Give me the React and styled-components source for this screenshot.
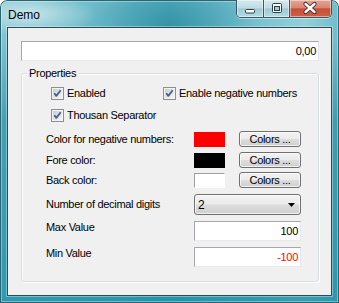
import React from "react";
import styled, { createGlobalStyle } from "styled-components";

const Global = createGlobalStyle`
  html, body { margin: 0; padding: 0; background: #fff; }
  body {
    font-family: "Liberation Sans", Arial, sans-serif;
    font-size: 11px;
    color: #000;
    overflow: hidden;
  }
  #root { width: 339px; height: 303px; }
`;

const Window = styled.div`
  box-sizing: border-box;
  width: 339px;
  height: 303px;
  display: flex;
  flex-direction: column;
  padding: 0 7px 7px 7px;
  border-radius: 7px 7px 0 0;
  background:
    radial-gradient(ellipse 70px 22px at 28px 14px, rgba(255,255,255,0.6), rgba(255,255,255,0) 100%),
    radial-gradient(ellipse 90px 40px at 170px 24px, rgba(30,130,150,0.55), rgba(30,130,150,0) 100%),
    linear-gradient(180deg, rgba(255,255,255,0) 0px, rgba(255,255,255,0) 40px, rgba(20,130,155,0.55) 120px, rgba(20,140,165,0.75) 100%),
    linear-gradient(90deg, #7ec4d1 0%, #6cbac9 30%, #52abbd 50%, #78c1ce 75%, #92d0da 90%, #6fbccb 100%);
  box-shadow: inset 0 0 0 1px #2b6573, inset 0 0 0 2px rgba(255,255,255,0.35);
`;

const TitleBar = styled.div`
  height: 27px;
  flex: none;
  display: flex;
  align-items: flex-start;
`;

const Title = styled.span`
  font-size: 12px;
  letter-spacing: 0;
  line-height: 14px;
  margin-top: 8px;
  padding-left: 1px;
  color: #000;
`;

const CaptionGroup = styled.div`
  margin-left: auto;
  display: flex;
  height: 18px;
  box-sizing: border-box;
  border: 1px solid #3a5864;
  border-top: none;
  border-radius: 0 0 5px 5px;
  overflow: hidden;
  box-shadow: 0 1px 0 rgba(255,255,255,0.5);
`;

const CaptionButton = styled.div`
  width: ${(p) => p.$w}px;
  height: 17px;
  box-sizing: border-box;
  display: flex;
  border-left: ${(p) => (p.$first ? "none" : "1px solid #3a5864")};
  background: ${(p) =>
    p.$close
      ? "linear-gradient(#e3a597 0%, #d98674 45%, #c4503a 52%, #cf5f44 100%)"
      : "linear-gradient(#d6e9ee 0%, #bfdde4 45%, #9ccad5 52%, #b3dbe3 100%)"};
  box-shadow: inset 0 0 0 1px rgba(255,255,255,0.45);
`;

const Client = styled.div`
  flex: 1;
  box-sizing: border-box;
  border: 1px solid #2f4a53;
  background: #f0f0f0;
  padding: 13px 12px 13px 13px;
  display: flex;
  flex-direction: column;
  letter-spacing: -0.3px;
  box-shadow: 0 0 0 1px rgba(255,255,255,0.35);
`;

const TextBox = styled.div`
  box-sizing: border-box;
  width: ${(p) => p.$w}px;
  height: 20px;
  background: #fff;
  border: 1px solid;
  border-color: #a5a7ad #e3e6ea #e9ecef #a5a7ad;
  display: flex;
  align-items: center;
  justify-content: flex-end;
  padding-right: 2px;
  color: ${(p) => p.$color || "#000"};
  grid-column: ${(p) => (p.$span ? "2 / span 2" : "auto")};
`;

const Group = styled.div`
  position: relative;
  box-sizing: border-box;
  margin-top: 12px;
  width: 298px;
  height: 209px;
  border: 1px solid #d5dfe5;
  border-radius: 3px;
  box-shadow: inset 1px 1px 0 #fff, 1px 1px 0 #fff;
  padding: 13px 0 0 24px;
  display: flex;
  flex-direction: column;
`;

const GroupTitle = styled.span`
  position: absolute;
  top: -7px;
  left: 5px;
  padding: 0 2px;
  line-height: 13px;
  background: #f0f0f0;
`;

const CheckRow = styled.div`
  display: grid;
  grid-template-columns: 112px auto;
  margin-left: 5px;
  margin-top: ${(p) => p.$mt || 0}px;
  height: 13px;
`;

const CheckItem = styled.label`
  display: flex;
  align-items: center;
  gap: 3px;
  line-height: 13px;
  white-space: nowrap;
  svg { flex: none; }
`;

const FieldRow = styled.div`
  display: grid;
  grid-template-columns: 148px 45px 62px;
  align-items: center;
  height: ${(p) => p.$h}px;
  margin-top: ${(p) => p.$mt}px;
`;

const FieldLabel = styled.span`
  line-height: 13px;
  white-space: nowrap;
  align-self: ${(p) => (p.$top ? "start" : "center")};
`;

const Swatch = styled.div`
  box-sizing: border-box;
  width: 31px;
  height: 15px;
  background: ${(p) => p.$color};
  border: 1px solid;
  border-color: ${(p) =>
    p.$color === "#ffffff" ? "#a0a0a0 #fff #fff #a0a0a0" : p.$color};
`;

const PushButton = styled.button`
  box-sizing: border-box;
  width: 62px;
  height: 16px;
  padding: 0;
  font: inherit;
  letter-spacing: -0.3px;
  color: #000;
  border: 1px solid #707070;
  border-radius: 3px;
  background: linear-gradient(#f2f2f2 0%, #ebebeb 48%, #dddddd 52%, #cfcfcf 100%);
  box-shadow: inset 0 0 0 1px rgba(255,255,255,0.7);
  display: flex;
  align-items: center;
  justify-content: center;
  line-height: 13px;
`;

const Combo = styled.div`
  grid-column: 2 / span 2;
  box-sizing: border-box;
  width: 107px;
  height: 21px;
  border: 1px solid #707070;
  border-radius: 3px;
  background: linear-gradient(#f2f2f2 0%, #ebebeb 48%, #dddddd 52%, #cfcfcf 100%);
  box-shadow: inset 0 0 0 1px rgba(255,255,255,0.7);
  display: flex;
  align-items: center;
  justify-content: space-between;
  padding: 0 5px 0 3px;
  font-size: 12px;
`;

const CheckBoxIcon = () => (
  <svg width="13" height="13" viewBox="0 0 13 13">
    <defs>
      <linearGradient id="cbfill" x1="0" y1="0" x2="1" y2="1">
        <stop offset="0" stopColor="#c9cdd3" />
        <stop offset="1" stopColor="#f6f6f7" />
      </linearGradient>
    </defs>
    <rect x="0.5" y="0.5" width="12" height="12" fill="#f4f4f4" stroke="#8e8f8f" />
    <rect x="2" y="2" width="9" height="9" fill="url(#cbfill)" />
    <path d="M3.3 6.2 L5.3 8.9 L9.7 3.3" fill="none" stroke="#4a5f8f" strokeWidth="1.8" strokeLinejoin="round" />
  </svg>
);

const MinIcon = () => (
  <svg width="26" height="17" viewBox="0 0 26 17">
    <rect x="8.5" y="9.5" width="9" height="3.5" rx="1" fill="#fff" stroke="#2c3f48" />
  </svg>
);

const MaxIcon = () => (
  <svg width="25" height="17" viewBox="0 0 25 17">
    <rect x="8.5" y="3.5" width="9" height="9" rx="1" fill="#fff" stroke="#2c3f48" />
    <rect x="10.5" y="6.5" width="5" height="4" fill="#9ccad5" stroke="#2c3f48" />
  </svg>
);

const CloseIcon = () => (
  <svg width="41" height="17" viewBox="0 0 41 17">
    <path d="M15.5 4 L24.5 12 M24.5 4 L15.5 12" stroke="#3b2a26" strokeWidth="4.2" strokeLinecap="round" />
    <path d="M15.5 4 L24.5 12 M24.5 4 L15.5 12" stroke="#fff" strokeWidth="2.4" strokeLinecap="round" />
  </svg>
);

const ArrowIcon = () => (
  <svg width="7" height="4" viewBox="0 0 7 4">
    <path d="M0 0 H7 L3.5 4 Z" fill="#000" />
  </svg>
);

export default function App() {
  return (
    <>
      <Global />
      <Window>
        <TitleBar>
          <Title>Demo</Title>
          <CaptionGroup>
            <CaptionButton $w={26} $first>
              <MinIcon />
            </CaptionButton>
            <CaptionButton $w={26}>
              <MaxIcon />
            </CaptionButton>
            <CaptionButton $w={42} $close>
              <CloseIcon />
            </CaptionButton>
          </CaptionGroup>
        </TitleBar>
        <Client>
          <TextBox $w={298}>0,00</TextBox>
          <Group>
            <GroupTitle>Properties</GroupTitle>
            <CheckRow>
              <CheckItem>
                <CheckBoxIcon />
                Enabled
              </CheckItem>
              <CheckItem>
                <CheckBoxIcon />
                Enable negative numbers
              </CheckItem>
            </CheckRow>
            <CheckRow $mt={9}>
              <CheckItem>
                <CheckBoxIcon />
                Thousan Separator
              </CheckItem>
            </CheckRow>
            <FieldRow $h={16} $mt={9}>
              <FieldLabel>Color for negative numbers:</FieldLabel>
              <Swatch $color="#ff0000" />
              <PushButton>Colors ...</PushButton>
            </FieldRow>
            <FieldRow $h={16} $mt={5}>
              <FieldLabel>Fore color:</FieldLabel>
              <Swatch $color="#000000" />
              <PushButton>Colors ...</PushButton>
            </FieldRow>
            <FieldRow $h={16} $mt={4}>
              <FieldLabel>Back color:</FieldLabel>
              <Swatch $color="#ffffff" />
              <PushButton>Colors ...</PushButton>
            </FieldRow>
            <FieldRow $h={21} $mt={6}>
              <FieldLabel>Number of decimal digits</FieldLabel>
              <Combo>
                <span>2</span>
                <ArrowIcon />
              </Combo>
            </FieldRow>
            <FieldRow $h={20} $mt={6}>
              <FieldLabel $top>Max Value</FieldLabel>
              <TextBox $w={107} $span>100</TextBox>
            </FieldRow>
            <FieldRow $h={20} $mt={6}>
              <FieldLabel $top>Min Value</FieldLabel>
              <TextBox $w={107} $span $color="#ff0000">-100</TextBox>
            </FieldRow>
          </Group>
        </Client>
      </Window>
    </>
  );
}
